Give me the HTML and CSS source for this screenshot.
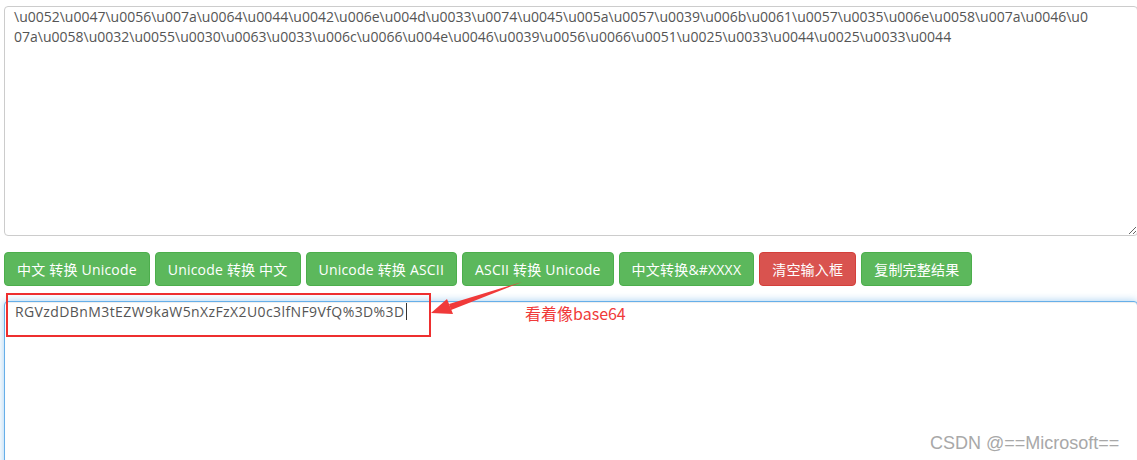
FILE: index.html
```html
<html lang="zh">
<head>
    <meta charset="UTF-8">
    <title>Unicode 转换</title>
    <link rel="stylesheet" href="styles.css">
</head>
<body>
<div class="page">
    <textarea class="box box-input" readonly>\u0052\u0047\u0056\u007a\u0064\u0044\u0042\u006e\u004d\u0033\u0074\u0045\u005a\u0057\u0039\u006b\u0061\u0057\u0035\u006e\u0058\u007a\u0046\u007a\u0058\u0032\u0055\u0030\u0063\u0033\u006c\u0066\u004e\u0046\u0039\u0056\u0066\u0051\u0025\u0033\u0044\u0025\u0033\u0044</textarea>

    <div class="toolbar">
        <button type="button" class="btn btn-green">中文 转换 Unicode</button>
        <button type="button" class="btn btn-green">Unicode 转换 中文</button>
        <button type="button" class="btn btn-green">Unicode 转换 ASCII</button>
        <button type="button" class="btn btn-green">ASCII 转换 Unicode</button>
        <button type="button" class="btn btn-green">中文转换&amp;#XXXX</button>
        <button type="button" class="btn btn-red">清空输入框</button>
        <button type="button" class="btn btn-green">复制完整结果</button>
    </div>

    <div class="box box-output focused">RGVzdDBnM3tEZW9kaW5nXzFzX2U0c3lfNF9VfQ%3D%3D<span class="caret"></span></div>
</div>

<div class="mark-box"></div>
<svg class="mark-arrow" width="1137" height="460" viewBox="0 0 1137 460">
    <path d="M522 282 L449 304 L451 310 Z" fill="#f03a3a"/>
    <polygon points="431,313 447,299 453,314" fill="#f03a3a"/>
</svg>
<div class="mark-text">看着像base64</div>
<div class="watermark">CSDN @==Microsoft==</div>
</body>
</html>
```

FILE: styles.css
```css
body {
    margin: 0;
    overflow: hidden;
    background: #fff;
    font-family: "Open Sans", "Noto Sans CJK SC", sans-serif;
    font-size: 14px;
}

.page {
    padding: 6px 0 0 4px;
}

.box {
    display: block;
    box-sizing: border-box;
    width: 1134px;
    margin: 0;
    padding: 0 9px;
    border: 1px solid #ccc;
    border-radius: 4px;
    color: #555;
    font-family: "Open Sans", "Noto Sans CJK SC", sans-serif;
    font-size: 14px;
    line-height: 20px;
    background: #fff;
}

.box-input {
    height: 230px;
    padding-right: 47px;
    resize: both;
    overflow-wrap: break-word;
    word-break: break-all;
}

.box-output {
    height: 200px;
    padding-left: 10px;
    letter-spacing: 0.4px;
}

.focused {
    border-color: #66afe9;
    box-shadow: inset 0 1px 1px rgba(0,0,0,.075), 0 0 8px rgba(102,175,233,.6);
}

.caret {
    display: inline-block;
    width: 1px;
    height: 17px;
    margin-left: 1px;
    background: #333;
    vertical-align: -3px;
}

.toolbar {
    display: flex;
    gap: 5px;
    margin: 16px 0 15px;
}

.btn {
    height: 34px;
    padding: 0 12px;
    border: 1px solid transparent;
    border-radius: 4px;
    color: #fff;
    font-family: "Open Sans", "Noto Sans CJK SC", sans-serif;
    font-size: 14px;
    letter-spacing: 0.2px;
    cursor: pointer;
}

.btn-green {
    background-color: #5cb85c;
    border-color: #4cae4c;
}

.btn-red {
    background-color: #d9534f;
    border-color: #d43f3a;
}

.mark-box {
    position: absolute;
    left: 6px;
    top: 293px;
    width: 421px;
    height: 40px;
    border: 2px solid #ee2f2f;
}

.mark-arrow {
    position: absolute;
    left: 0;
    top: 0;
    pointer-events: none;
}

.mark-text {
    position: absolute;
    left: 525px;
    top: 302px;
    color: #f03a3a;
    font-family: "Noto Sans CJK SC", sans-serif;
    font-size: 16px;
    line-height: 22px;
}

.watermark {
    position: absolute;
    left: 930px;
    top: 432px;
    color: #a8a8a8;
    font-family: "Liberation Sans", Arial, sans-serif;
    font-size: 18px;
    line-height: 22px;
}
```
